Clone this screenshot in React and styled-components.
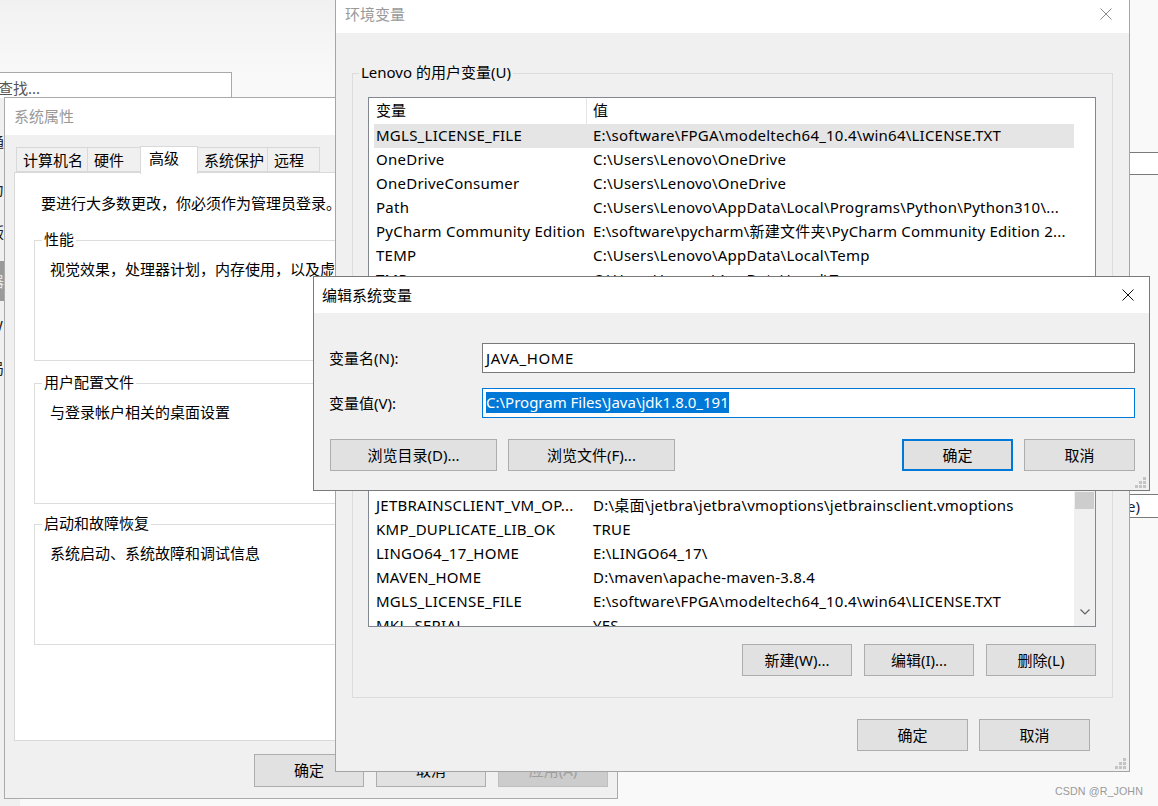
import React from 'react'
import styled, { createGlobalStyle } from 'styled-components'

const GlobalStyle = createGlobalStyle`
  * { box-sizing: border-box; }
  html, body { margin: 0; padding: 0; background: #f9f9f9; }
  body {
    font-family: "Noto Sans", "Noto Sans CJK SC", sans-serif;
    font-size: 15px;
    line-height: 20px;
    color: #000;
  }
`

const Desktop = styled.div`
  position: relative;
  width: 1158px;
  height: 806px;
  overflow: hidden;
  background: #f9f9f9;
`

/* ---------- apps lying behind the dialogs ---------- */

const BackAppLeft = styled.div`
  position: absolute;
  left: 0;
  top: 0;
  width: 340px;
  height: 806px;
  display: flex;
  flex-direction: column;
  background: linear-gradient(#f1f1f1, #f9f9f9 80px);
`

const SearchBox = styled.div`
  margin-top: 72px;
  width: 232px;
  height: 26px;
  flex: none;
  padding-top: 3px;
  border-top: 1px solid #a9a9a9;
  border-right: 1px solid #a9a9a9;
  background: #fff;
  color: #555;
  line-height: 24px;
  text-indent: -2px;
  white-space: nowrap;
  overflow: hidden;
`

const SideStrip = styled.div`
  width: 20px;
  flex: 1;
  display: flex;
  flex-direction: column;
  background: #f0f0f0;
`

const SideItem = styled.div`
  margin-top: ${p => p.$gap}px;
  height: ${p => p.$h || 20}px;
  line-height: ${p => p.$h || 20}px;
  text-indent: -11px;
  overflow: hidden;
  white-space: nowrap;
  color: ${p => (p.$dark ? '#e6e6e6' : '#222')};
  background: ${p => (p.$dark ? '#9a9a9a' : 'transparent')};
`

const BackAppRight = styled.div`
  position: absolute;
  left: 1128px;
  top: 0;
  width: 40px;
  height: 806px;
  display: flex;
  flex-direction: column;
  background: #f9f9f9;
`

const BackField = styled.div`
  margin-top: ${p => p.$gap}px;
  height: ${p => p.$h}px;
  flex: none;
  border-top: 1px solid #7a7a7a;
  border-bottom: 1px solid #7a7a7a;
  background: #fff;
  line-height: ${p => p.$h - 2}px;
  text-indent: -1px;
  color: #1b1b3a;
  white-space: nowrap;
  overflow: hidden;
`

/* ---------- window chrome ---------- */

const Window = styled.div`
  position: absolute;
  left: ${p => p.$x}px;
  top: ${p => p.$y}px;
  width: ${p => p.$w}px;
  height: ${p => p.$h}px;
  display: flex;
  flex-direction: column;
  background: #f0f0f0;
  border: 1px solid ${p => p.$border};
  overflow: hidden;
`

const TitleBar = styled.div`
  flex: none;
  height: ${p => p.$h}px;
  display: flex;
  align-items: center;
  justify-content: space-between;
  padding-left: ${p => p.$pad}px;
  padding-bottom: 1px;
  background: #fff;
  color: ${p => (p.$active ? '#000' : '#999')};
  white-space: nowrap;
`

const CloseBtn = styled.div`
  width: ${p => p.$w}px;
  height: 100%;
  display: flex;
  align-items: center;
  justify-content: center;
`

const Grip = styled.svg`
  position: absolute;
  right: 3px;
  bottom: 2px;
`

const Button = styled.button`
  width: ${p => p.$w}px;
  height: ${p => p.$h}px;
  flex: none;
  padding: 0 0 1px;
  font: inherit;
  line-height: 20px;
  display: flex;
  align-items: center;
  justify-content: center;
  white-space: nowrap;
  background: ${p => (p.$disabled ? '#cccccc' : '#e1e1e1')};
  border: ${p =>
    p.$default ? '2px solid #0078d7' : `1px solid ${p.$disabled ? '#bfbfbf' : '#adadad'}`};
  color: ${p => (p.$disabled ? '#9f9f9f' : '#000')};
`

const ButtonRow = styled.div`
  display: flex;
  justify-content: ${p => p.$justify || 'flex-end'};
  gap: ${p => p.$gap}px;
  margin-top: ${p => p.$top}px;
  padding-right: ${p => p.$right || 0}px;
  flex: none;
`

const Group = styled.div`
  flex: none;
  height: ${p => (p.$h ? `${p.$h}px` : 'auto')};
  margin: ${p => p.$top}px ${p => p.$side}px 0;
  border: 1px solid #dcdcdc;
  padding: 0 ${p => p.$padR || 0}px ${p => p.$padB || 0}px ${p => p.$padL}px;
  display: flex;
  flex-direction: column;
`

const GroupTitle = styled.div`
  align-self: flex-start;
  margin: -12px 0 0 ${p => p.$shift}px;
  padding: 0 2px 1px;
  line-height: 20px;
  background: ${p => p.$bg};
  white-space: nowrap;
`

const GroupText = styled.div`
  margin-top: 9px;
  white-space: nowrap;
`

const CloseIcon = ({ color }) => (
  <svg width="12" height="12" viewBox="0 0 12 12">
    <path d="M0.5 0.5 L11.5 11.5 M11.5 0.5 L0.5 11.5" stroke={color} strokeWidth="1" />
  </svg>
)

const SizeGrip = () => (
  <Grip width="11" height="11" viewBox="0 0 11 11">
    {[[8, 0], [4, 4], [8, 4], [0, 8], [4, 8], [8, 8]].map(([x, y]) => (
      <rect key={`${x}-${y}`} x={x} y={y} width="3" height="3" fill="#c4c4c4" />
    ))}
  </Grip>
)

/* ---------- 系统属性 ---------- */

const SysBody = styled.div`
  flex: 1;
  display: flex;
  flex-direction: column;
  padding: 11px 9px 0;
`

const TabStrip = styled.div`
  display: flex;
  align-items: flex-end;
  height: 26px;
  padding-left: 2px;
  position: relative;
  z-index: 1;
  flex: none;
`

const Tab = styled.div`
  width: ${p => p.$w}px;
  height: ${p => (p.$active ? 28 : 25)}px;
  margin-left: -1px;
  margin-bottom: ${p => (p.$active ? -2 : 0)}px;
  padding: ${p => (p.$active ? 1 : 2)}px 0 0 ${p => (p.$active ? 8 : 6)}px;
  border: 1px solid #d9d9d9;
  border-bottom: ${p => (p.$active ? 'none' : '1px solid #d9d9d9')};
  background: ${p => (p.$active ? '#fff' : '#f0f0f0')};
  white-space: nowrap;
  &:first-child { margin-left: 0; }
`

const TabPanel = styled.div`
  height: 569px;
  flex: none;
  background: #fff;
  border: 1px solid #d9d9d9;
  display: flex;
  flex-direction: column;
`

const Notice = styled.div`
  margin: 20px 0 1px 26px;
  white-space: nowrap;
`

/* ---------- 环境变量 ---------- */

const EnvBody = styled.div`
  flex: 1;
  display: flex;
  flex-direction: column;
  padding: 40px 16px 0;
`

const ListBox = styled.div`
  margin-top: 14px;
  height: 530px;
  flex: none;
  display: flex;
  border: 1px solid #828790;
  background: #fff;
`

const ListMain = styled.div`
  flex: 1;
  min-width: 0;
  display: flex;
  flex-direction: column;
  overflow: hidden;
`

const ListHeader = styled.div`
  height: 26px;
  flex: none;
  display: flex;
  align-items: center;
`

const HeaderCell = styled.div`
  width: ${p => (p.$w ? `${p.$w}px` : 'auto')};
  flex: ${p => (p.$w ? 'none' : 1)};
  height: 100%;
  line-height: 24px;
  padding-left: ${p => p.$pad}px;
  border-right: ${p => (p.$w ? '1px solid #e5e5e5' : 'none')};
  white-space: nowrap;
`

const Rows = styled.div`
  display: flex;
  flex-direction: column;
  padding-left: 5px;
`

const Row = styled.div`
  display: flex;
  flex: none;
  height: 24px;
  line-height: 22px;
  margin-top: ${p => p.$gap || 0}px;
  background: ${p => (p.$selected ? '#e5e5e5' : 'transparent')};
  white-space: nowrap;
`

const NameCell = styled.div`
  width: 213px;
  flex: none;
  padding-left: 2px;
  letter-spacing: 0.25px;
  overflow: hidden;
`

const ValueCell = styled.div`
  flex: 1;
  min-width: 0;
  padding-left: 6px;
  letter-spacing: 0.22px;
  overflow: hidden;
`

const ScrollCol = styled.div`
  width: 21px;
  flex: none;
  display: flex;
  flex-direction: column;
`

const ScrollTrack = styled.div`
  margin-top: 340px;
  flex: 1;
  display: flex;
  flex-direction: column;
  background: #f0f0f0;
`

const ScrollThumb = styled.div`
  margin: 54px 1px 0;
  height: 17px;
  background: #cdcdcd;
`

const ScrollArrow = styled.div`
  margin-top: auto;
  height: 28px;
  display: flex;
  align-items: center;
  justify-content: center;
`

/* ---------- 编辑系统变量 ---------- */

const EditBody = styled.div`
  flex: 1;
  display: flex;
  flex-direction: column;
  padding: 30px 14px 0 15px;
`

const FieldRow = styled.div`
  display: flex;
  align-items: center;
  height: 30px;
  flex: none;
  margin-top: ${p => p.$gap || 0}px;
`

const FieldLabel = styled.div`
  width: 153px;
  flex: none;
  padding-bottom: 1px;
  white-space: nowrap;
`

const TextInput = styled.div`
  flex: 1;
  height: 30px;
  display: flex;
  align-items: center;
  padding: 0 3px 1px;
  background: #fff;
  border: 1px solid ${p => (p.$focused ? '#0078d7' : '#7a7a7a')};
  letter-spacing: ${p => p.$spacing || 0}px;
  white-space: nowrap;
`

const Selection = styled.span`
  background: #0078d7;
  color: #fff;
  line-height: 21px;
`

const EditActions = styled.div`
  display: flex;
  gap: 11px;
  margin-top: 21px;
  padding-left: 1px;
  flex: none;
`

const Fill = styled.div`
  flex: 1;
`

const Watermark = styled.div`
  position: absolute;
  right: 15px;
  bottom: 8px;
  font-family: "Liberation Sans", Arial, sans-serif;
  font-size: 10.7px;
  line-height: 14px;
  color: #9a9a9a;
  letter-spacing: 0.1px;
`

const tabs = [
  { label: '计算机名', w: 72 },
  { label: '硬件', w: 54 },
  { label: '高级', w: 58, active: true },
  { label: '系统保护', w: 71 },
  { label: '远程', w: 53 },
]

const groups = [
  { title: '性能', text: '视觉效果，处理器计划，内存使用，以及虚拟内存', top: 26 },
  { title: '用户配置文件', text: '与登录帐户相关的桌面设置', top: 22 },
  { title: '启动和故障恢复', text: '系统启动、系统故障和调试信息', top: 20 },
]

const vars = [
  { name: 'MGLS_LICENSE_FILE', value: 'E:\\software\\FPGA\\modeltech64_10.4\\win64\\LICENSE.TXT', selected: true },
  { name: 'OneDrive', value: 'C:\\Users\\Lenovo\\OneDrive' },
  { name: 'OneDriveConsumer', value: 'C:\\Users\\Lenovo\\OneDrive' },
  { name: 'Path', value: 'C:\\Users\\Lenovo\\AppData\\Local\\Programs\\Python\\Python310\\...' },
  { name: 'PyCharm Community Edition', value: 'E:\\software\\pycharm\\新建文件夹\\PyCharm Community Edition 2...' },
  { name: 'TEMP', value: 'C:\\Users\\Lenovo\\AppData\\Local\\Temp' },
  { name: 'TMP', value: 'C:\\Users\\Lenovo\\AppData\\Local\\Temp' },
  { name: 'JETBRAINSCLIENT_VM_OP...', value: 'D:\\桌面\\jetbra\\jetbra\\vmoptions\\jetbrainsclient.vmoptions', gap: 202 },
  { name: 'KMP_DUPLICATE_LIB_OK', value: 'TRUE' },
  { name: 'LINGO64_17_HOME', value: 'E:\\LINGO64_17\\' },
  { name: 'MAVEN_HOME', value: 'D:\\maven\\apache-maven-3.8.4' },
  { name: 'MGLS_LICENSE_FILE', value: 'E:\\software\\FPGA\\modeltech64_10.4\\win64\\LICENSE.TXT' },
  { name: 'MKL_SERIAL', value: 'YES' },
]

const sideBits = [
  { t: '通', gap: 34 },
  { t: '为', gap: 27 },
  { t: '版', gap: 23 },
  { t: '器', gap: 19, h: 40, dark: true },
  { t: 'W', gap: 14 },
  { t: '局', gap: 23 },
]

export default function App() {
  return (
    <Desktop>
      <GlobalStyle />

      <BackAppLeft>
        <SearchBox>查找...</SearchBox>
        <SideStrip>
          {sideBits.map(b => (
            <SideItem key={b.t} $gap={b.gap} $h={b.h} $dark={b.dark}>{b.t}</SideItem>
          ))}
        </SideStrip>
      </BackAppLeft>

      <BackAppRight>
        <BackField $gap={152} $h={23} />
        <BackField $gap={319} $h={24}>e)</BackField>
      </BackAppRight>

      <Window $x={4} $y={97} $w={614} $h={702} $border="#aaaaaa">
        <TitleBar $h={37} $pad={9}>系统属性</TitleBar>
        <SysBody>
          <TabStrip>
            {tabs.map(t => (
              <Tab key={t.label} $w={t.w} $active={t.active}>{t.label}</Tab>
            ))}
          </TabStrip>
          <TabPanel>
            <Notice>要进行大多数更改，你必须作为管理员登录。</Notice>
            {groups.map(g => (
              <Group key={g.title} $h={121} $top={g.top} $side={19} $padL={15}>
                <GroupTitle $shift={-8} $bg="#fff">{g.title}</GroupTitle>
                <GroupText>{g.text}</GroupText>
              </Group>
            ))}
          </TabPanel>
          <ButtonRow $gap={12} $top={13}>
            <Button $w={110} $h={33}>确定</Button>
            <Button $w={110} $h={33}>取消</Button>
            <Button $w={110} $h={33} $disabled>应用(A)</Button>
          </ButtonRow>
        </SysBody>
      </Window>

      <Window $x={335} $y={-6} $w={795} $h={778} $border="#a5a5a5">
        <TitleBar $h={38} $pad={9}>
          环境变量
          <CloseBtn $w={46}><CloseIcon color="#8c8c8c" /></CloseBtn>
        </TitleBar>
        <EnvBody>
          <Group $top={0} $side={0} $padL={15} $padR={16} $padB={21}>
            <GroupTitle $shift={-9} $bg="#f0f0f0">Lenovo 的用户变量(U)</GroupTitle>
            <ListBox>
              <ListMain>
                <ListHeader>
                  <HeaderCell $w={218} $pad={7}>变量</HeaderCell>
                  <HeaderCell $pad={6}>值</HeaderCell>
                </ListHeader>
                <Rows>
                  {vars.map((v, i) => (
                    <Row key={i} $selected={v.selected} $gap={v.gap}>
                      <NameCell>{v.name}</NameCell>
                      <ValueCell>{v.value}</ValueCell>
                    </Row>
                  ))}
                </Rows>
              </ListMain>
              <ScrollCol>
                <ScrollTrack>
                  <ScrollThumb />
                  <ScrollArrow>
                    <svg width="10" height="6" viewBox="0 0 10 6">
                      <polyline points="0.5,0.5 5,5 9.5,0.5" fill="none" stroke="#606060" strokeWidth="1.2" />
                    </svg>
                  </ScrollArrow>
                </ScrollTrack>
              </ScrollCol>
            </ListBox>
            <ButtonRow $gap={12} $top={17}>
              <Button $w={110} $h={32}>新建(W)...</Button>
              <Button $w={110} $h={32}>编辑(I)...</Button>
              <Button $w={110} $h={32}>删除(L)</Button>
            </ButtonRow>
          </Group>
          <ButtonRow $gap={11} $top={21} $right={23}>
            <Button $w={111} $h={32}>确定</Button>
            <Button $w={111} $h={32}>取消</Button>
          </ButtonRow>
        </EnvBody>
        <SizeGrip />
      </Window>

      <Window $x={313} $y={276} $w={837} $h={215} $border="#7a7a7a">
        <TitleBar $h={36} $pad={8} $active>
          编辑系统变量
          <CloseBtn $w={42}><CloseIcon color="#111" /></CloseBtn>
        </TitleBar>
        <EditBody>
          <FieldRow>
            <FieldLabel>变量名(N):</FieldLabel>
            <TextInput $spacing={0.6}>JAVA_HOME</TextInput>
          </FieldRow>
          <FieldRow $gap={15}>
            <FieldLabel>变量值(V):</FieldLabel>
            <TextInput $focused>
              <Selection>C:\Program Files\Java\jdk1.8.0_191</Selection>
            </TextInput>
          </FieldRow>
          <EditActions>
            <Button $w={167} $h={32}>浏览目录(D)...</Button>
            <Button $w={167} $h={32}>浏览文件(F)...</Button>
            <Fill />
            <Button $w={111} $h={32} $default>确定</Button>
            <Button $w={111} $h={32}>取消</Button>
          </EditActions>
        </EditBody>
        <SizeGrip />
      </Window>

      <Watermark>CSDN @R_JOHN</Watermark>
    </Desktop>
  )
}
